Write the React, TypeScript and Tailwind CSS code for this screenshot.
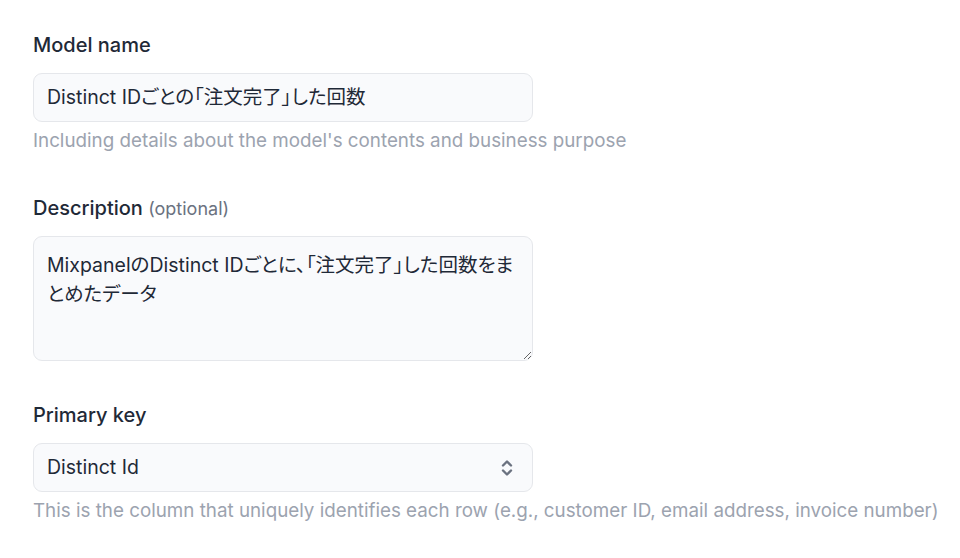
import React from "react";

const font = { fontFamily: '"Inter", "Noto Sans CJK JP", sans-serif', fontFeatureSettings: '"palt"' };

function Chevrons() {
  return (
    <svg width="14" height="18" viewBox="0 0 14 18" fill="none" stroke="#6b7280" strokeWidth="2.4" strokeLinecap="round" strokeLinejoin="round">
      <path d="M3 6.5 L7 2.5 L11 6.5" />
      <path d="M3 11.5 L7 15.5 L11 11.5" />
    </svg>
  );
}

export default function App() {
  return (
    <div className="w-[960px] h-[558px] bg-white overflow-hidden [font-feature-settings:'palt']" style={font}>
      <div className="pl-[33px] pt-[31px] w-[533px]">
        <div className="text-[20px] leading-[28px] font-medium text-[#1f2937]">Model name</div>
        <div className="mt-[14px] h-[49px] rounded-[9px] border border-[#e5e7eb] bg-[#f9fafc] flex items-center px-[13px] text-[19.5px] text-[#1f2937]">
          Distinct IDごとの「注文完了」した回数
        </div>
        <div className="mt-[6px] text-[18.8px] leading-[26px] text-[#9ca3af] whitespace-nowrap">
          Including details about the model's contents and business purpose
        </div>

        <div className="mt-[40px] text-[20px] leading-[28px] font-medium text-[#1f2937]">
          Description <span className="text-[18px] font-normal text-[#6b7280]">(optional)</span>
        </div>
        <textarea
          readOnly
          value="MixpanelのDistinct IDごとに、「注文完了」した回数をまとめたデータ"
          className="mt-[13px] block w-full h-[125px] rounded-[9px] border border-[#e5e7eb] bg-[#f9fafc] px-[13px] py-[14px] text-[19.5px] leading-[29px] text-[#1f2937] outline-none resize-y"
          style={font}
        />

        <div className="mt-[40px] text-[20px] leading-[28px] font-medium text-[#1f2937]">Primary key</div>
        <div className="mt-[14px] h-[49px] rounded-[9px] border border-[#e5e7eb] bg-[#f9fafc] flex items-center justify-between pl-[13px] pr-[18px] text-[19.5px] text-[#1f2937]">
          <span>Distinct Id</span>
          <Chevrons />
        </div>
        <div className="mt-[6px] text-[18.8px] leading-[26px] text-[#9ca3af] whitespace-nowrap">
          This is the column that uniquely identifies each row (e.g., customer ID, email address, invoice number)
        </div>
      </div>
    </div>
  );
}
